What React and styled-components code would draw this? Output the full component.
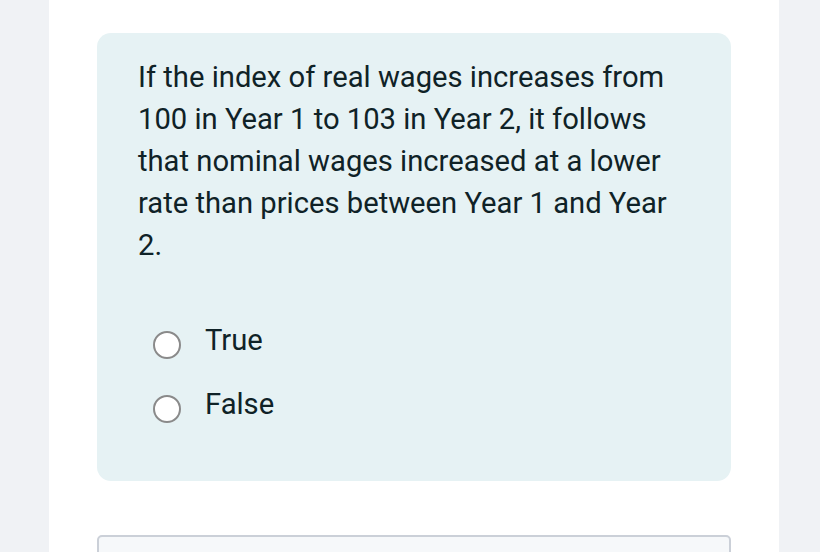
import styled, { createGlobalStyle } from 'styled-components';

const GlobalStyle = createGlobalStyle`
    html, body {
        margin: 0;
        padding: 0;
        background: #f0f2f5;
        font-family: Roboto, "Liberation Sans", sans-serif;
    }
`;

const Page = styled.div`
    width: 634px;
    height: 552px;
    margin-left: 49px;
    padding: 33px 48px 0;
    background: #ffffff;
    overflow: hidden;
`;

const QuestionCard = styled.div`
    background: #e6f2f4;
    border-radius: 14px;
    padding: 23px 50px 56px 41px;
    color: #0f2227;
`;

const Prompt = styled.p`
    margin: 0;
    font-size: 29.2px;
    line-height: 42px;
`;

const Options = styled.div`
    display: flex;
    flex-direction: column;
    gap: 22px;
    margin-top: 53px;
    padding-left: 15px;
`;

const Option = styled.label`
    display: flex;
    align-items: center;
    gap: 24px;
    font-size: 29.2px;
    line-height: 42px;
    cursor: pointer;
`;

const Radio = styled.span`
    width: 24px;
    height: 24px;
    margin-top: 10px;
    border: 2.6px solid #8a8a8a;
    border-radius: 50%;
    background: #ffffff;
    flex-shrink: 0;
`;

const NextCard = styled.div`
    margin-top: 54px;
    height: 80px;
    border: 2px solid #cbd0d8;
    border-radius: 5px;
    background: #f6f8fa;
`;

const options = ['True', 'False'];

const App = () => {
    return (
        <>
            <GlobalStyle />
            <Page>
                <QuestionCard>
                    <Prompt>
                        If the index of real wages increases from 100 in Year 1 to 103 in Year 2, it follows
                        that nominal wages increased at a lower rate than prices between Year 1 and Year 2.
                    </Prompt>
                    <Options>
                        {options.map((opt) => (
                            <Option key={opt}>
                                <Radio />
                                {opt}
                            </Option>
                        ))}
                    </Options>
                </QuestionCard>
                <NextCard />
            </Page>
        </>
    );
};

export default App;
